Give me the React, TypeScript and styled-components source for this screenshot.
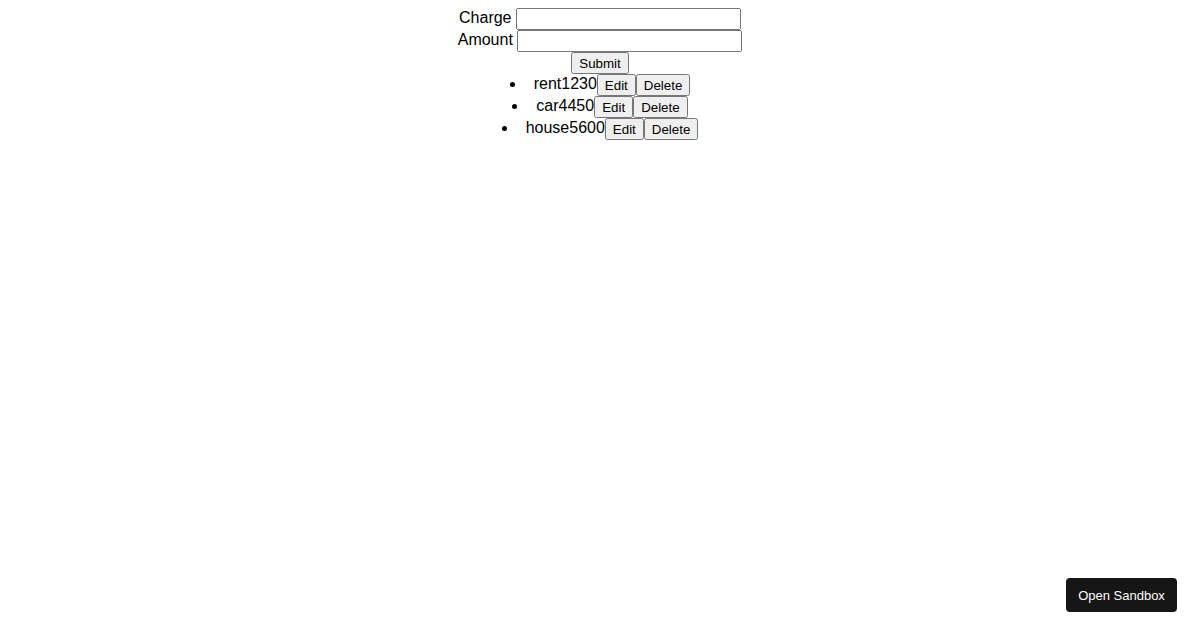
import React, { useState } from 'react'
import styled, { createGlobalStyle } from 'styled-components'

const GlobalStyle = createGlobalStyle`
  body {
    margin: 8px;
    background: #ffffff;
    color: #000000;
    font-family: "Liberation Sans", Arial, sans-serif;
    font-size: 16px;
  }
`

const Page = styled.div`
  text-align: center;
`

const Form = styled.form`
  margin: 0;
`

const Row = styled.div`
  line-height: 18px;
`

const Label = styled.label`
  font-size: 16px;
`

const TextInput = styled.input`
  box-sizing: border-box;
  width: 225px;
  height: 22px;
  font: 13.33px "Liberation Sans", Arial, sans-serif;
  vertical-align: middle;
`

const Button = styled.button`
  font: 13.33px "Liberation Sans", Arial, sans-serif;
  height: 22px;
  padding: 1px 6px;
  vertical-align: middle;
`

const List = styled.ul`
  margin: 0;
  padding: 0;
  list-style: disc inside;
`

const Item = styled.li`
  line-height: 18px;
`

const Text = styled.span`
  margin-left: 2px;
`

const SandboxButton = styled.a`
  position: fixed;
  right: 23px;
  bottom: 18px;
  box-sizing: border-box;
  width: 111px;
  height: 34px;
  display: flex;
  align-items: center;
  justify-content: center;
  background: #151515;
  color: #ffffff;
  border-radius: 4px;
  font: 13px "Liberation Sans", Arial, sans-serif;
  text-decoration: none;
`

type Expense = { id: number; charge: string; amount: number }

const App: React.FC = () => {
  const [charge, setCharge] = useState('')
  const [amount, setAmount] = useState('')
  const [expenses] = useState<Expense[]>([
    { id: 1, charge: 'rent', amount: 1230 },
    { id: 2, charge: 'car', amount: 4450 },
    { id: 3, charge: 'house', amount: 5600 },
  ])

  return (
    <Page>
      <GlobalStyle />
      <Form onSubmit={(e) => e.preventDefault()}>
        <Row>
          <Label htmlFor="charge">Charge</Label>{' '}
          <TextInput id="charge" value={charge} onChange={(e) => setCharge(e.target.value)} />
        </Row>
        <Row>
          <Label htmlFor="amount">Amount</Label>{' '}
          <TextInput id="amount" value={amount} onChange={(e) => setAmount(e.target.value)} />
        </Row>
        <Button type="submit">Submit</Button>
      </Form>
      <List>
        {expenses.map((item) => (
          <Item key={item.id}>
            <Text>
              {item.charge}
              {item.amount}
            </Text>
            <Button>Edit</Button>
            <Button>Delete</Button>
          </Item>
        ))}
      </List>
      <SandboxButton href="#">Open Sandbox</SandboxButton>
    </Page>
  )
}

export default App
